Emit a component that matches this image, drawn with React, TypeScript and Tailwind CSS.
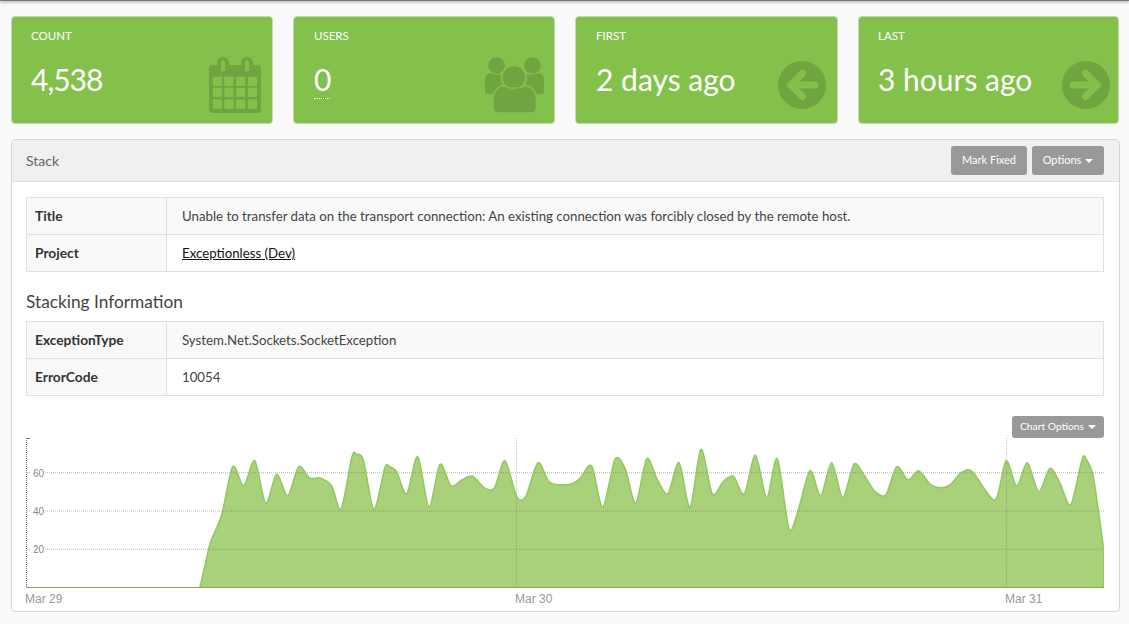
import React from "react";

const font = { fontFamily: '"Lato", "Noto Sans", sans-serif' };
const ICON = "#6fa440";
const CARD = "#84c14b";

const pts: [number, number][] = [
  [200,587.3],[204,570],[210.7,541.7],[221.7,515],[232.7,466.7],[243.7,486],[254.7,460.7],[265.7,503.3],[276.7,474],[287.7,496],[298.7,466.7],[309.7,478.3],[320,478],[331.7,486],[341,509.3],[352,456.7],[356.7,454.3],[363.3,460],[374,509.3],[385,467.3],[390,467],[396.7,471.7],[406.7,494],[417.7,456.7],[429,507.3],[440,464.3],[451,486],[461.7,480],[472.7,476.3],[484,487.7],[494.3,488.3],[505,460.7],[516.7,496.7],[525.7,496.7],[538,462.7],[550,482.7],[570,484.3],[580,478.3],[591.7,466],[602.7,507.3],[615,459.3],[625,468.3],[635.7,503.3],[646.7,458.7],[656.7,478.3],[667.7,494],[679,462.7],[690,507.3],[701,449.3],[712.3,494],[723.3,481.7],[733.3,476.3],[744.3,494],[755.4,455],[766.7,497.7],[777.3,458.7],[789,529],[798.3,510],[810,470.7],[820.7,495.7],[831.7,462.7],[842.7,497.7],[854,464.3],[863.3,474],[875,491.7],[886,494.7],[896.7,466.7],[908,480],[918.7,470.7],[930,484],[940,487.7],[950,485],[961.7,472.3],[972.7,472],[995,500],[1006,460.7],[1016.7,486],[1027.3,462.7],[1038.7,491.7],[1050,468.3],[1060,483.3],[1070.7,505],[1082.3,458.7],[1086.7,460],[1092.7,474],[1098.3,510],[1103.3,546.7],
];

function smooth(p: [number, number][]) {
  let d = `M${p[0][0]} ${p[0][1]}`;
  for (let i = 0; i < p.length - 1; i++) {
    const a = p[Math.max(i - 1, 0)], b = p[i], c = p[i + 1], e = p[Math.min(i + 2, p.length - 1)];
    const k = 0.14;
    d += ` C${(b[0] + (c[0] - a[0]) * k).toFixed(1)} ${(b[1] + (c[1] - a[1]) * k).toFixed(1)} ${(c[0] - (e[0] - b[0]) * k).toFixed(1)} ${(c[1] - (e[1] - b[1]) * k).toFixed(1)} ${c[0]} ${c[1]}`;
  }
  return d;
}

const CalendarIcon = () => (
  <svg width="70" height="70" viewBox="0 0 70 70" className="block">
    <rect x="9" y="15" width="52" height="48" rx="3.5" fill={ICON} />
    {[17, 41].map((x) => (
      <g key={x}>
        <rect x={x} y="7" width="12" height="18" rx="6" fill={ICON} />
        <rect x={x + 4} y="10" width="4" height="11.5" rx="2" fill={CARD} />
      </g>
    ))}
    {[26.7, 37.7, 49.5].map((y) =>
      [12.8, 24.3, 36, 47.8].map((x) => <rect key={`${x}-${y}`} x={x} y={y} width="9.2" height="9.3" fill={CARD} />)
    )}
  </svg>
);

const UsersIcon = () => (
  <svg width="70" height="70" viewBox="0 0 70 70" className="block">
    <circle cx="17.5" cy="15.5" r="8.3" fill={ICON} />
    <circle cx="53.5" cy="15.5" r="8.3" fill={ICON} />
    <path d="M6 30 C6 25 9 23 12 23 C14 25 20 25 24 24 L24 40 L13 44 L9 44 C7 44 6 43 6 41 Z" fill={ICON} />
    <path d="M65 30 C65 25 62 23 59 23 C57 25 51 25 47 24 L47 40 L58 44 L62 44 C64 44 65 43 65 41 Z" fill={ICON} />
    <circle cx="35" cy="27.5" r="12.2" fill={ICON} stroke={CARD} strokeWidth="2" />
    <path d="M14 58 L14 50 C14 41 20 35.5 25 35.5 C29 39 41 39 46 35.5 C52 35.5 57.5 41 57.5 50 L57.5 58 C57.5 61 55 63 52 63 L19 63 C16 63 14 61 14 58 Z" fill={ICON} stroke={CARD} strokeWidth="1.5" />
  </svg>
);

const ArrowIcon = ({ right }: { right?: boolean }) => (
  <svg width="48" height="48" viewBox="0 0 48 48" className="block">
    <circle cx="24" cy="24" r="24" fill={ICON} />
    <g transform={right ? "rotate(180 24 24)" : undefined} fill="none" stroke={CARD} strokeWidth="7" strokeLinecap="round" strokeLinejoin="miter">
      <path d="M37 24 L13 24" strokeWidth="7" />
      <path d="M24.5 12.5 L13 24 L24.5 35.5" />
    </g>
  </svg>
);

function StatCard({ label, value, icon, dotted, iconClass, numeric, padClass }: { label: string; value: string; icon: React.ReactNode; dotted?: boolean; iconClass: string; numeric?: boolean; padClass: string }) {
  return (
    <div className={`h-[108px] rounded-[4px] border border-[#c5d9b2] bg-[#84c14b] ${padClass} pr-2 pt-[10px] text-white flex flex-col`}>
      <div className="text-[11.5px] leading-[18px] uppercase">{label}</div>
      <div className="flex justify-between items-start flex-1">
        <div className={`text-[30px] leading-[36px] mt-[16px] ${numeric ? "tracking-[-1px]" : ""}`}>
          {dotted ? <span className="inline-block leading-[30px] border-b border-dotted border-white pb-[4px]">{value}</span> : value}
        </div>
        <div className={iconClass}>{icon}</div>
      </div>
    </div>
  );
}

function InfoTable({ rows }: { rows: [string, React.ReactNode][] }) {
  return (
    <div className="border-t border-l border-r border-[#e0e0e0] text-[13.25px] text-[#444]">
      {rows.map(([k, v]) => (
        <div key={k} className="flex h-[37px] border-b border-[#e0e0e0]">
          <div className="w-[140px] shrink-0 border-r border-[#e0e0e0] bg-[#f9f9f9] flex items-center pl-2 text-[13.75px] font-bold text-[#333]">{k}</div>
          <div className={`flex-1 flex items-center pl-[15px] pt-px ${k === "Title" || k === "ExceptionType" ? "bg-[#f9f9f9]" : "bg-white"}`}>{v}</div>
        </div>
      ))}
    </div>
  );
}

function GrayButton({ children, cls }: { children: React.ReactNode; cls: string }) {
  return <button className={`rounded-[3px] bg-[#999] text-white flex items-center justify-center ${cls}`}>{children}</button>;
}

const Caret = () => <span className="ml-1 inline-block w-0 h-0 border-x-[4px] border-x-transparent border-t-[4px] border-t-white" />;

function Chart() {
  const line = smooth(pts);
  const grid = "#aaa";
  return (
    <svg width="1082" height="170" viewBox="24 438 1082 170" className="block -ml-[2px] overflow-visible">
      <path d={`${line} L1103.3 587.5 L200 587.5 Z`} fill="#a9d17a" />
      {[472.7, 511, 549.3].map((y) => (
        <line key={y} x1="45" x2="1104" y1={y} y2={y} stroke="#777" strokeOpacity="0.55" strokeDasharray="1 1" />
      ))}
      {[516.5, 1006.5].map((x) => (
        <line key={x} x1={x} x2={x} y1="438" y2="587" stroke="#777" strokeOpacity="0.55" strokeDasharray="1 1.5" />
      ))}
      <path d={line} fill="none" stroke="#93c95f" strokeWidth="1.6" />
      <line x1="1103.5" x2="1103.5" y1="547" y2="587" stroke="#93c95f" />
      <line x1="26.5" x2="26.5" y1="438" y2="587.5" stroke="#777" strokeDasharray="1 1" />
      <line x1="26.5" x2="30" y1="438.5" y2="438.5" stroke="#777" />
      {[472.7, 511, 549.3].map((y) => (
        <line key={y} x1="27" x2="31" y1={y} y2={y} stroke={grid} strokeDasharray="1 1" />
      ))}
      <line x1="26.5" x2="200" y1="587.5" y2="587.5" stroke="#7fa85a" />
      <line x1="200" x2="1104" y1="587.5" y2="587.5" stroke="#7fae52" />
      {[["60", 476.5], ["40", 515], ["20", 553]].map(([t, y]) => (
        <text key={t} x="33" y={y} fontSize="10" fill="#888" style={{ fontFamily: '"Liberation Sans", sans-serif' }}>{t}</text>
      ))}
      {[["Mar 29", 25], ["Mar 30", 515], ["Mar 31", 1005]].map(([t, x]) => (
        <text key={t} x={x} y="603" fontSize="12" fill="#999" style={{ fontFamily: '"Liberation Sans", sans-serif' }}>{t}</text>
      ))}
    </svg>
  );
}

export default function App() {
  return (
    <div className="min-h-[624px] bg-[#fafafa] text-[#444]" style={font}>
      <div className="h-px bg-[#777] shadow-[0_1px_3px_rgba(0,0,0,0.6)]" />
      <div className="px-[11px] pt-[15px] w-[1130px]">
        <div className="grid grid-cols-[262px_262px_263px_261px] gap-x-[20px]">
          <StatCard label="Count" value="4,538" numeric padClass="pl-[19px]" icon={<CalendarIcon />} iconClass="mt-[5px] -mr-[6px]" />
          <StatCard label="Users" value="0" numeric dotted padClass="pl-[20px]" icon={<UsersIcon />} iconClass="mt-[5px] -mr-[3px]" />
          <StatCard label="First" value="2 days ago" padClass="pl-[20px]" icon={<ArrowIcon />} iconClass="mt-[16px] mr-[3px]" />
          <StatCard label="Last" value="3 hours ago" padClass="pl-[19px]" icon={<ArrowIcon right />} iconClass="mt-[16px]" />
        </div>

        <div className="mt-[15px] w-[1109px] h-[473px] rounded-[4px] border border-[#d5d5d5] bg-white overflow-hidden">
          <div className="h-[42px] bg-[#f0f0f0] border-b border-[#dedede] flex items-center justify-between pl-[14px] pr-[15px]">
            <span className="text-[14px] text-[#666]">Stack</span>
            <div className="flex gap-[5px]">
              <GrayButton cls="w-[76px] h-[29px] text-[11px]">Mark Fixed</GrayButton>
              <GrayButton cls="w-[72px] h-[29px] text-[11px]">Options<Caret /></GrayButton>
            </div>
          </div>
          <div className="pl-[14px] pr-[15px] pt-[15px]">
            <InfoTable
              rows={[
                ["Title", "Unable to transfer data on the transport connection: An existing connection was forcibly closed by the remote host."],
                ["Project", <a className="underline text-[#111]">Exceptionless (Dev)</a>],
              ]}
            />
            <h3 className="text-[17.3px] leading-[20px] mt-[20px] mb-[9px] text-[#444]">Stacking Information</h3>
            <InfoTable
              rows={[
                ["ExceptionType", "System.Net.Sockets.SocketException"],
                ["ErrorCode", "10054"],
              ]}
            />
            <div className="flex justify-end mt-5">
              <GrayButton cls="w-[92px] h-[22px] text-[10.3px]">Chart Options<Caret /></GrayButton>
            </div>
            <Chart />
          </div>
        </div>
      </div>
    </div>
  );
}
